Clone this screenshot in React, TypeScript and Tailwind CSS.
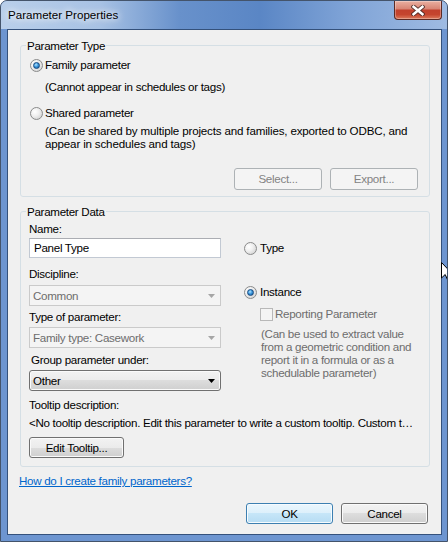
import React from "react";

function Radio({ checked }: { checked?: boolean }) {
  return (
    <span className="w-[13px] h-[13px] shrink-0 rounded-full border border-[#8a8b8b] bg-[radial-gradient(circle_at_35%_35%,#ffffff_0%,#f0f0f0_40%,#c8c8c8_100%)] flex items-center justify-center">
      {checked && (
        <span className="w-[7px] h-[7px] rounded-full border border-[#174a80] bg-[radial-gradient(circle_at_40%_35%,#b5e6ff_0%,#3c98de_45%,#12528f_100%)]" />
      )}
    </span>
  );
}

function DisabledSelect({ value }: { value: string }) {
  return (
    <div className="h-[21px] border border-[#cacaca] bg-[#f4f4f4] flex items-center pl-[3px] text-[#6d6d6d]">
      <span className="flex-1 whitespace-nowrap">{value}</span>
      <svg width="7" height="4" viewBox="0 0 7 4" className="mr-[5px]">
        <path d="M0 0H7L3.5 4Z" fill="#a6a6a6" />
      </svg>
    </div>
  );
}

export default function App() {
  return (
    <div className="relative w-[448px] h-[542px] overflow-hidden flex flex-col bg-[#6d95d0] border border-[#44546b] rounded-t-[7px] font-['Liberation_Sans',Arial,sans-serif] text-[11.6px] leading-[16px] tracking-[-0.3px] text-black">
      {/* Title bar */}
      <div className="h-[28px] shrink-0 flex items-start bg-[linear-gradient(to_right,#b9cfea_0%,#a8c2e4_22%,#6891cb_40%,#5a86c5_58%,#80a4d7_78%,#9fbbe2_100%)]">
        <div className="self-center ml-[7px] whitespace-nowrap tracking-normal [text-shadow:0_0_6px_#ffffff,0_0_10px_#ffffff]">
          Parameter Properties
        </div>
        <div className="ml-auto mr-[5px] w-[48px] h-[19px] rounded-b-[4px] border border-t-0 border-[#5b2a24] bg-[linear-gradient(#eab0a1_0%,#d98676_42%,#c2412d_52%,#c5452e_75%,#dc7a5c_100%)] shadow-[inset_0_0_0_1px_rgba(255,255,255,0.3)] flex items-center justify-center">
          <svg width="14" height="11" viewBox="0 0 14 11">
            <path d="M2.5 1.8 L11.5 9.2 M11.5 1.8 L2.5 9.2" stroke="#4a2c28" strokeOpacity="0.85" strokeWidth="4.4" strokeLinecap="square" />
            <path d="M2.5 1.8 L11.5 9.2 M11.5 1.8 L2.5 9.2" stroke="#ffffff" strokeWidth="2.4" strokeLinecap="square" />
          </svg>
        </div>
      </div>

      {/* Client area */}
      <div className="flex-1 min-w-0 ml-[6px] mr-[5px] mb-[6px] border border-[#34517b] bg-[#f0f0f0] flex flex-col pl-[12px] pr-[11px]">
        {/* Parameter Type */}
        <fieldset className="min-w-0 mt-[8px] border border-[#d5dfe5] rounded-[3px]">
          <legend className="ml-[5px] px-[1px] leading-[15px]">Parameter Type</legend>
          <div className="pl-[9px] pr-[11px] pt-[4px] pb-[6px] flex flex-col">
            <div className="h-[16px] flex items-center gap-[2px]">
              <Radio checked />
              <span>Family parameter</span>
            </div>
            <div className="mt-[6px] h-[16px] pl-[15px]">(Cannot appear in schedules or tags)</div>
            <div className="mt-[10px] h-[16px] flex items-center gap-[2px]">
              <Radio />
              <span>Shared parameter</span>
            </div>
            <div className="mt-[3px] pl-[15px] leading-[13px] whitespace-nowrap tracking-[-0.17px]">
              (Can be shared by multiple projects and families, exported to ODBC, and
              <br />
              appear in schedules and tags)
            </div>
            <div className="mt-[18px] flex justify-end gap-[8px]">
              <button className="w-[88px] h-[22px] rounded-[3px] border border-[#adb2b5] bg-[#f4f4f4] text-[#838383] text-center">
                Select...
              </button>
              <button className="w-[88px] h-[22px] rounded-[3px] border border-[#adb2b5] bg-[#f4f4f4] text-[#838383] text-center">
                Export...
              </button>
            </div>
          </div>
        </fieldset>

        {/* Parameter Data */}
        <fieldset className="min-w-0 mt-[7px] border border-[#d5dfe5] rounded-[3px]">
          <legend className="ml-[5px] px-[1px] leading-[15px]">Parameter Data</legend>
          <div className="pl-[8px] pr-[10px] pt-[2px] pb-[8px] flex flex-col">
            <div className="flex">
              <div className="w-[192px] shrink-0 flex flex-col">
                <div className="h-[16px]">Name:</div>
                <div className="mt-[1px] h-[20px] border border-[#c2c9d3] border-t-[#abadb3] bg-white flex items-center pl-[4px]">
                  Panel Type
                </div>
                <div className="mt-[8px] h-[16px]">Discipline:</div>
                <div className="mt-[3px]">
                  <DisabledSelect value="Common" />
                </div>
                <div className="mt-[3px] h-[16px]">Type of parameter:</div>
                <div className="mt-[2px]">
                  <DisabledSelect value="Family type: Casework" />
                </div>
                <div className="mt-[4px] h-[16px] pl-[2px]">Group parameter under:</div>
                <div className="mt-[2px] h-[21px] rounded-[3px] border border-[#707070] bg-[linear-gradient(#f2f2f2_0%,#ebebeb_50%,#dddddd_50%,#cfcfcf_100%)] shadow-[inset_0_0_0_1px_#fafafa] flex items-center pl-[3px]">
                  <span className="flex-1">Other</span>
                  <svg width="7" height="4" viewBox="0 0 7 4" className="mr-[5px]">
                    <path d="M0 0H7L3.5 4Z" fill="#000000" />
                  </svg>
                </div>
              </div>
              <div className="ml-[23px] flex flex-col">
                <div className="mt-[19px] h-[16px] flex items-center gap-[3px]">
                  <Radio />
                  <span>Type</span>
                </div>
                <div className="mt-[28px] h-[16px] flex items-center gap-[3px]">
                  <Radio checked />
                  <span>Instance</span>
                </div>
                <div className="mt-[6px] h-[16px] pl-[16px] flex items-center gap-[2px]">
                  <span className="w-[13px] h-[13px] border border-[#b8b8b8] bg-[#f4f4f4]" />
                  <span className="text-[#6d6d6d]">Reporting Parameter</span>
                </div>
                <div className="mt-[5px] pl-[17px] leading-[13px] whitespace-nowrap text-[#6d6d6d]">
                  (Can be used to extract value
                  <br />
                  from a geometric condition and
                  <br />
                  report it in a formula or as a
                  <br />
                  schedulable parameter)
                </div>
              </div>
            </div>
            <div className="mt-[6px] h-[16px]">Tooltip description:</div>
            <div className="mt-[2px] h-[16px] whitespace-nowrap overflow-hidden">
              &lt;No tooltip description. Edit this parameter to write a custom tooltip. Custom t…
            </div>
            <div className="mt-[6px]">
              <button className="w-[95px] h-[21px] rounded-[3px] border border-[#707070] bg-[linear-gradient(#f2f2f2_0%,#ebebeb_50%,#dddddd_50%,#cfcfcf_100%)] shadow-[inset_0_0_0_1px_#fafafa] text-center">
                Edit Tooltip...
              </button>
            </div>
          </div>
        </fieldset>

        <div className="mt-[6px] h-[16px] ml-[-1px]">
          <span className="text-[#0066cc] underline">How do I create family parameters?</span>
        </div>

        <div className="mt-[14px] mr-[2px] flex justify-end gap-[8px]">
          <button className="w-[87px] h-[21px] rounded-[3px] border border-[#3c7fb1] bg-[linear-gradient(#eaf6fd_0%,#dcf0fb_50%,#c6e6f8_50%,#b6dcf3_100%)] shadow-[inset_0_0_0_1px_#f6fbfe] text-center">
            OK
          </button>
          <button className="w-[87px] h-[21px] rounded-[3px] border border-[#707070] bg-[linear-gradient(#f2f2f2_0%,#ebebeb_50%,#dddddd_50%,#cfcfcf_100%)] shadow-[inset_0_0_0_1px_#fafafa] text-center">
            Cancel
          </button>
        </div>
      </div>

      {/* Mouse cursor at the right edge */}
      <svg className="absolute left-[440px] top-[261px]" width="12" height="19" viewBox="0 0 12 19">
        <path d="M0.5 0.5 V16 L4.2 12.5 L6.8 18.3 L8.8 17.4 L6.3 11.8 H11.3 Z" fill="#ffffff" stroke="#000000" />
      </svg>
    </div>
  );
}
